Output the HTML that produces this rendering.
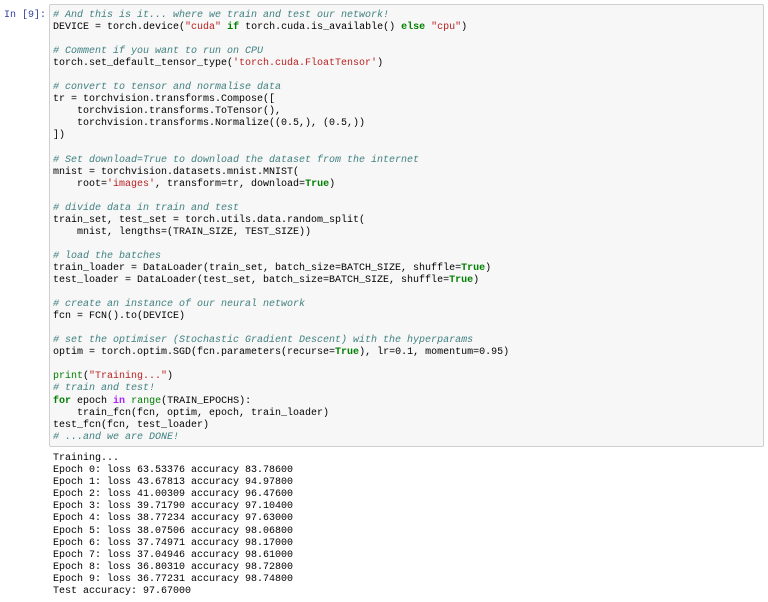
<!DOCTYPE html>
<html><head><meta charset="utf-8"><style>
body{margin:0;background:#fff;width:768px;height:602px;overflow:hidden;font-family:"Liberation Mono",monospace;font-size:10px;}
.p{position:absolute;left:4px;top:10px;color:#303F9F;line-height:12px;}
.box{position:absolute;left:49px;top:4px;width:715px;height:443px;background:#f7f7f7;border:1px solid #cfcfcf;border-radius:2px;box-sizing:border-box;}
pre{margin:0;font-family:inherit;font-size:10px;line-height:12.05px;white-space:pre;}
.code{position:absolute;left:53px;top:10px;color:#000;}
.out{position:absolute;left:53px;top:453px;color:#000;line-height:12.1px;}
.c{color:#408080;font-style:italic}.k{color:#008000;font-weight:bold}.s{color:#BA2121}.b{color:#008000}.o{color:#AA22FF;font-weight:bold}
</style></head><body>
<div class="p">In [9]:</div>
<div class="box"></div>
<pre class="code"><span class="c"># And this is it... where we train and test our network!</span>
DEVICE = torch.device(<span class="s">"cuda"</span> <span class="k">if</span> torch.cuda.is_available() <span class="k">else</span> <span class="s">"cpu"</span>)

<span class="c"># Comment if you want to run on CPU</span>
torch.set_default_tensor_type(<span class="s">'torch.cuda.FloatTensor'</span>)

<span class="c"># convert to tensor and normalise data</span>
tr = torchvision.transforms.Compose([
    torchvision.transforms.ToTensor(),
    torchvision.transforms.Normalize((0.5,), (0.5,))
])

<span class="c"># Set download=True to download the dataset from the internet</span>
mnist = torchvision.datasets.mnist.MNIST(
    root=<span class="s">'images'</span>, transform=tr, download=<span class="k">True</span>)

<span class="c"># divide data in train and test</span>
train_set, test_set = torch.utils.data.random_split(
    mnist, lengths=(TRAIN_SIZE, TEST_SIZE))

<span class="c"># load the batches</span>
train_loader = DataLoader(train_set, batch_size=BATCH_SIZE, shuffle=<span class="k">True</span>)
test_loader = DataLoader(test_set, batch_size=BATCH_SIZE, shuffle=<span class="k">True</span>)

<span class="c"># create an instance of our neural network</span>
fcn = FCN().to(DEVICE)

<span class="c"># set the optimiser (Stochastic Gradient Descent) with the hyperparams</span>
optim = torch.optim.SGD(fcn.parameters(recurse=<span class="k">True</span>), lr=0.1, momentum=0.95)

<span class="b">print</span>(<span class="s">"Training..."</span>)
<span class="c"># train and test!</span>
<span class="k">for</span> epoch <span class="o">in</span> <span class="b">range</span>(TRAIN_EPOCHS):
    train_fcn(fcn, optim, epoch, train_loader)
test_fcn(fcn, test_loader)
<span class="c"># ...and we are DONE!</span></pre>
<pre class="out">Training...
Epoch 0: loss 63.53376 accuracy 83.78600
Epoch 1: loss 43.67813 accuracy 94.97800
Epoch 2: loss 41.00309 accuracy 96.47600
Epoch 3: loss 39.71790 accuracy 97.10400
Epoch 4: loss 38.77234 accuracy 97.63000
Epoch 5: loss 38.07506 accuracy 98.06800
Epoch 6: loss 37.74971 accuracy 98.17000
Epoch 7: loss 37.04946 accuracy 98.61000
Epoch 8: loss 36.80310 accuracy 98.72800
Epoch 9: loss 36.77231 accuracy 98.74800
Test accuracy: 97.67000</pre>
</body></html>
